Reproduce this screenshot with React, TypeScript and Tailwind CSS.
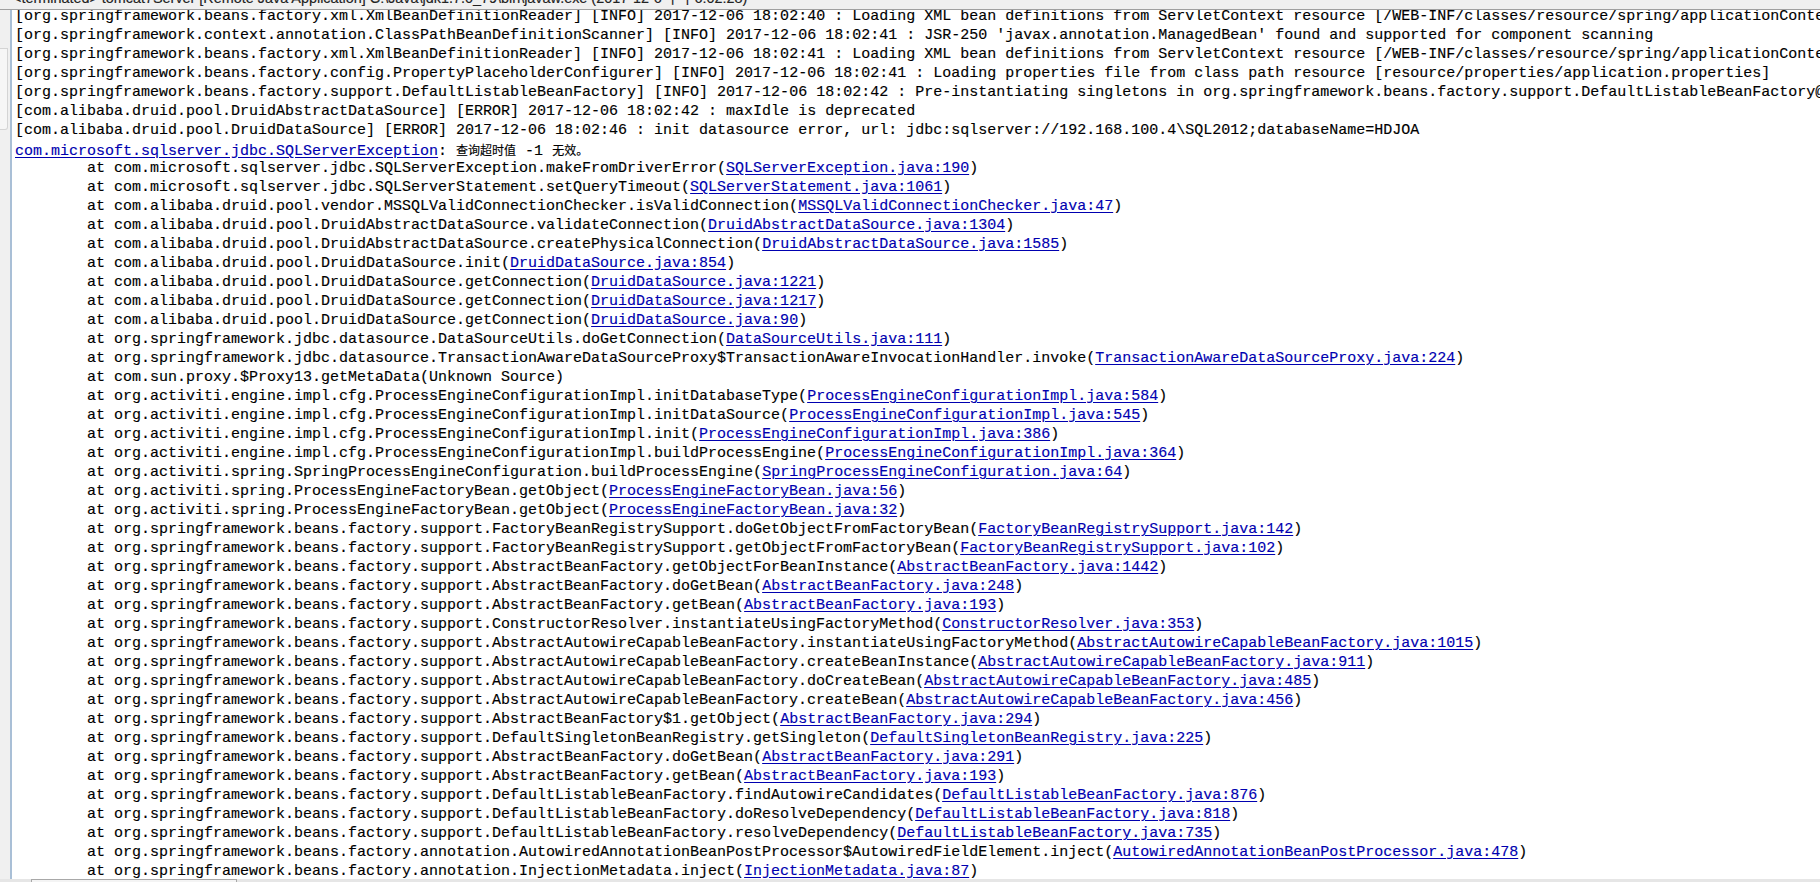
const logLines = [
  "[org.springframework.beans.factory.xml.XmlBeanDefinitionReader] [INFO] 2017-12-06 18:02:40 : Loading XML bean definitions from ServletContext resource [/WEB-INF/classes/resource/spring/applicationContext.xml]",
  "[org.springframework.context.annotation.ClassPathBeanDefinitionScanner] [INFO] 2017-12-06 18:02:41 : JSR-250 'javax.annotation.ManagedBean' found and supported for component scanning",
  "[org.springframework.beans.factory.xml.XmlBeanDefinitionReader] [INFO] 2017-12-06 18:02:41 : Loading XML bean definitions from ServletContext resource [/WEB-INF/classes/resource/spring/applicationContext.xml]",
  "[org.springframework.beans.factory.config.PropertyPlaceholderConfigurer] [INFO] 2017-12-06 18:02:41 : Loading properties file from class path resource [resource/properties/application.properties]",
  "[org.springframework.beans.factory.support.DefaultListableBeanFactory] [INFO] 2017-12-06 18:02:42 : Pre-instantiating singletons in org.springframework.beans.factory.support.DefaultListableBeanFactory@",
  "[com.alibaba.druid.pool.DruidAbstractDataSource] [ERROR] 2017-12-06 18:02:42 : maxIdle is deprecated",
  "[com.alibaba.druid.pool.DruidDataSource] [ERROR] 2017-12-06 18:02:46 : init datasource error, url: jdbc:sqlserver://192.168.100.4\\SQL2012;databaseName=HDJOA",
]

const stackLines = [
  "at com.microsoft.sqlserver.jdbc.SQLServerException.makeFromDriverError(SQLServerException.java:190)",
  "at com.microsoft.sqlserver.jdbc.SQLServerStatement.setQueryTimeout(SQLServerStatement.java:1061)",
  "at com.alibaba.druid.pool.vendor.MSSQLValidConnectionChecker.isValidConnection(MSSQLValidConnectionChecker.java:47)",
  "at com.alibaba.druid.pool.DruidAbstractDataSource.validateConnection(DruidAbstractDataSource.java:1304)",
  "at com.alibaba.druid.pool.DruidAbstractDataSource.createPhysicalConnection(DruidAbstractDataSource.java:1585)",
  "at com.alibaba.druid.pool.DruidDataSource.init(DruidDataSource.java:854)",
  "at com.alibaba.druid.pool.DruidDataSource.getConnection(DruidDataSource.java:1221)",
  "at com.alibaba.druid.pool.DruidDataSource.getConnection(DruidDataSource.java:1217)",
  "at com.alibaba.druid.pool.DruidDataSource.getConnection(DruidDataSource.java:90)",
  "at org.springframework.jdbc.datasource.DataSourceUtils.doGetConnection(DataSourceUtils.java:111)",
  "at org.springframework.jdbc.datasource.TransactionAwareDataSourceProxy$TransactionAwareInvocationHandler.invoke(TransactionAwareDataSourceProxy.java:224)",
  "at com.sun.proxy.$Proxy13.getMetaData(Unknown Source)",
  "at org.activiti.engine.impl.cfg.ProcessEngineConfigurationImpl.initDatabaseType(ProcessEngineConfigurationImpl.java:584)",
  "at org.activiti.engine.impl.cfg.ProcessEngineConfigurationImpl.initDataSource(ProcessEngineConfigurationImpl.java:545)",
  "at org.activiti.engine.impl.cfg.ProcessEngineConfigurationImpl.init(ProcessEngineConfigurationImpl.java:386)",
  "at org.activiti.engine.impl.cfg.ProcessEngineConfigurationImpl.buildProcessEngine(ProcessEngineConfigurationImpl.java:364)",
  "at org.activiti.spring.SpringProcessEngineConfiguration.buildProcessEngine(SpringProcessEngineConfiguration.java:64)",
  "at org.activiti.spring.ProcessEngineFactoryBean.getObject(ProcessEngineFactoryBean.java:56)",
  "at org.activiti.spring.ProcessEngineFactoryBean.getObject(ProcessEngineFactoryBean.java:32)",
  "at org.springframework.beans.factory.support.FactoryBeanRegistrySupport.doGetObjectFromFactoryBean(FactoryBeanRegistrySupport.java:142)",
  "at org.springframework.beans.factory.support.FactoryBeanRegistrySupport.getObjectFromFactoryBean(FactoryBeanRegistrySupport.java:102)",
  "at org.springframework.beans.factory.support.AbstractBeanFactory.getObjectForBeanInstance(AbstractBeanFactory.java:1442)",
  "at org.springframework.beans.factory.support.AbstractBeanFactory.doGetBean(AbstractBeanFactory.java:248)",
  "at org.springframework.beans.factory.support.AbstractBeanFactory.getBean(AbstractBeanFactory.java:193)",
  "at org.springframework.beans.factory.support.ConstructorResolver.instantiateUsingFactoryMethod(ConstructorResolver.java:353)",
  "at org.springframework.beans.factory.support.AbstractAutowireCapableBeanFactory.instantiateUsingFactoryMethod(AbstractAutowireCapableBeanFactory.java:1015)",
  "at org.springframework.beans.factory.support.AbstractAutowireCapableBeanFactory.createBeanInstance(AbstractAutowireCapableBeanFactory.java:911)",
  "at org.springframework.beans.factory.support.AbstractAutowireCapableBeanFactory.doCreateBean(AbstractAutowireCapableBeanFactory.java:485)",
  "at org.springframework.beans.factory.support.AbstractAutowireCapableBeanFactory.createBean(AbstractAutowireCapableBeanFactory.java:456)",
  "at org.springframework.beans.factory.support.AbstractBeanFactory$1.getObject(AbstractBeanFactory.java:294)",
  "at org.springframework.beans.factory.support.DefaultSingletonBeanRegistry.getSingleton(DefaultSingletonBeanRegistry.java:225)",
  "at org.springframework.beans.factory.support.AbstractBeanFactory.doGetBean(AbstractBeanFactory.java:291)",
  "at org.springframework.beans.factory.support.AbstractBeanFactory.getBean(AbstractBeanFactory.java:193)",
  "at org.springframework.beans.factory.support.DefaultListableBeanFactory.findAutowireCandidates(DefaultListableBeanFactory.java:876)",
  "at org.springframework.beans.factory.support.DefaultListableBeanFactory.doResolveDependency(DefaultListableBeanFactory.java:818)",
  "at org.springframework.beans.factory.support.DefaultListableBeanFactory.resolveDependency(DefaultListableBeanFactory.java:735)",
  "at org.springframework.beans.factory.annotation.AutowiredAnnotationBeanPostProcessor$AutowiredFieldElement.inject(AutowiredAnnotationBeanPostProcessor.java:478)",
  "at org.springframework.beans.factory.annotation.InjectionMetadata.inject(InjectionMetadata.java:87)",
]

function Link({ children }: { children: string }) {
  return <span className="text-[#0000b0] underline underline-offset-2">{children}</span>
}

function StackLine({ line }: { line: string }) {
  // only frames with a file:line get a link, "Unknown Source" stays plain
  const m = line.match(/^(.*\()(.*\.java:\d+)(\))$/)
  return (
    <div className="h-[19px] pl-[72px]">
      {m ? (
        <>
          {m[1]}
          <Link>{m[2]}</Link>
          {m[3]}
        </>
      ) : (
        line
      )}
    </div>
  )
}

export default function App() {
  return (
    <div className="flex h-screen w-full flex-col overflow-hidden bg-white font-['Liberation_Mono',monospace] text-[15px] leading-[19px] text-black [-webkit-text-stroke:0.15px]">
      <div className="h-[10px] shrink-0 overflow-hidden border-b border-[#a0a0a0] bg-[#f0f0f0] pl-[13px]">
        <div className="-mt-[10px] whitespace-pre font-['Liberation_Sans','Noto_Sans_CJK_SC',sans-serif] text-[14.4px] leading-[17px] text-[#222]">
          {"<terminated> tomcat7Server [Remote Java Application] C:\\Java\\jdk1.7.0_79\\bin\\javaw.exe (2017-12-6 下午6:02:28)"}
        </div>
      </div>
      <div className="flex min-h-0 flex-1">
        <div className="w-[10px] shrink-0 bg-[#f0f0f0] pt-[38px]">
          <div className="h-[82px] w-[8px] rounded-br-[3px] border border-l-0 border-[#d4d4d4] bg-[#f6f6f6]" />
        </div>
        <div className="w-[2px] shrink-0 bg-[#a9bfd6]" />
        <div className="min-w-0 flex-1 overflow-hidden whitespace-pre pl-[3px]">
          <div className="-mt-[3px]">
            {logLines.map((l, i) => (
              <div key={i} className="h-[19px]">
                {l}
              </div>
            ))}
            <div className="flex h-[19px] items-baseline">
              <Link>com.microsoft.sqlserver.jdbc.SQLServerException</Link>
              <span>: </span>
              <span className="font-['Noto_Sans_CJK_SC',sans-serif] text-[12px]">查询超时值</span>
              <span> -1 </span>
              <span className="font-['Noto_Sans_CJK_SC',sans-serif] text-[12px]">无效。</span>
            </div>
            {stackLines.map((l, i) => (
              <StackLine key={i} line={l} />
            ))}
          </div>
        </div>
      </div>
      <div className="flex h-[3px] shrink-0 bg-[#e6e6e6] pl-[31px]">
        <div className="h-[3px] w-[206px] border border-b-0 border-[#a8a8a8] bg-[#f4f4f4]" />
      </div>
    </div>
  )
}
